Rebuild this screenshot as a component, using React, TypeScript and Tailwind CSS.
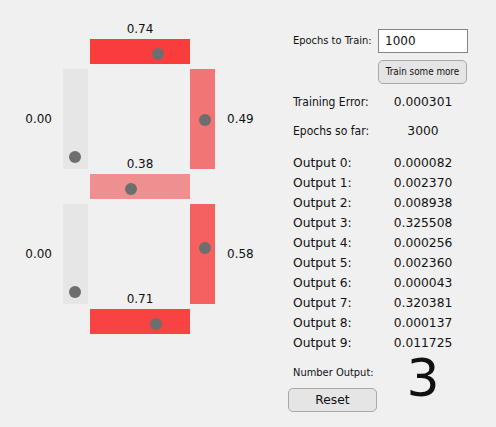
import React from 'react';

const segments = {
  top: 0.74,
  upperLeft: 0.0,
  upperRight: 0.49,
  middle: 0.38,
  lowerLeft: 0.0,
  lowerRight: 0.58,
  bottom: 0.71,
};

const outputs = [
  '0.000082',
  '0.002370',
  '0.008938',
  '0.325508',
  '0.000256',
  '0.002360',
  '0.000043',
  '0.320381',
  '0.000137',
  '0.011725',
];

// grey at 0, red at 1
const segColor = (v: number) => {
  const r = Math.round(230 + 25 * v);
  const gb = Math.round(230 * (1 - v));
  return `rgb(${r}, ${gb}, ${gb})`;
};

function HBar({ value }: { value: number }) {
  return (
    <div className="relative w-[100px] h-[25px]" style={{ backgroundColor: segColor(value) }}>
      <div
        className="absolute top-[9px] w-[12px] h-[12px] rounded-full bg-[#6e6e6e]"
        style={{ left: `${6.5 + 75 * value}px` }}
      />
    </div>
  );
}

function VBar({ value, right }: { value: number; right?: boolean }) {
  return (
    <div className="relative w-[25px] h-[100px]" style={{ backgroundColor: segColor(value) }}>
      <div
        className={`absolute w-[12px] h-[12px] rounded-full bg-[#6e6e6e] ${right ? 'left-[9px]' : 'left-[6px]'}`}
        style={{ top: `${82 - 76 * value}px` }}
      />
    </div>
  );
}

function SegLabel({ value }: { value: number }) {
  return (
    <div className="h-[15px] leading-[15px] text-center text-[12px]">{value.toFixed(2)}</div>
  );
}

export default function App() {
  const labelFont = "font-['DejaVu_Sans_Condensed','DejaVu_Sans',sans-serif] font-stretch-condensed";

  return (
    <div className="w-[496px] h-[427px] bg-[#f0f0f0] text-[#111] flex font-['DejaVu_Sans',sans-serif] overflow-hidden">
      {/* seven segment display */}
      <div className="flex w-[288px] shrink-0">
        {/* left column */}
        <div className="flex flex-col pt-[69px] gap-[35px]">
          <div className="flex items-center h-[100px]">
            <div className="w-[63px] pr-[11px] text-right text-[12px]">{segments.upperLeft.toFixed(2)}</div>
            <VBar value={segments.upperLeft} />
          </div>
          <div className="flex items-center h-[100px]">
            <div className="w-[63px] pr-[11px] text-right text-[12px]">{segments.lowerLeft.toFixed(2)}</div>
            <VBar value={segments.lowerLeft} />
          </div>
        </div>

        {/* center column */}
        <div className="flex flex-col w-[100px] ml-[2px] pt-[22px]">
          <SegLabel value={segments.top} />
          <div className="mt-[2px]">
            <HBar value={segments.top} />
          </div>
          <div className="mt-[93px]">
            <SegLabel value={segments.middle} />
          </div>
          <div className="mt-[2px]">
            <HBar value={segments.middle} />
          </div>
          <div className="mt-[93px]">
            <SegLabel value={segments.bottom} />
          </div>
          <div className="mt-[2px]">
            <HBar value={segments.bottom} />
          </div>
        </div>

        {/* right column */}
        <div className="flex flex-col pt-[69px] gap-[35px]">
          <div className="flex items-center h-[100px]">
            <VBar value={segments.upperRight} right />
            <div className="pl-[12px] text-[12px]">{segments.upperRight.toFixed(2)}</div>
          </div>
          <div className="flex items-center h-[100px]">
            <VBar value={segments.lowerRight} right />
            <div className="pl-[12px] text-[12px]">{segments.lowerRight.toFixed(2)}</div>
          </div>
        </div>
      </div>

      {/* training panel */}
      <div className="w-[190px] flex flex-col">
        <div className="flex items-center mt-[29px] pl-[5px]">
          <span className={`w-[85px] text-[11px] ${labelFont}`}>Epochs to Train:</span>
          <input
            defaultValue="1000"
            className="w-[90px] h-[24px] bg-white border border-[#848484] pl-[6px] text-[12px] outline-none font-['DejaVu_Sans',sans-serif]"
          />
        </div>
        <div className="pl-[90px] mt-[5px]">
          <button className={`w-[89px] h-[24px] rounded-[5px] bg-[#e5e5e5] border border-[#a8a8a8] text-[9.8px] ${labelFont}`}>
            Train some more
          </button>
        </div>

        <div className="flex items-center h-[20px] mt-[8px] pl-[5px]">
          <span className={`w-[90px] text-[12px] ${labelFont}`}>Training Error:</span>
          <span className="w-[80px] text-center text-[12.3px]">0.000301</span>
        </div>
        <div className="flex items-center h-[20px] mt-[9px] pl-[5px]">
          <span className={`w-[90px] text-[12px] ${labelFont}`}>Epochs so far:</span>
          <span className="w-[80px] text-center text-[12.3px]">3000</span>
        </div>

        <div className="flex flex-col mt-[12px]">
          {outputs.map((o, i) => (
            <div key={i} className="flex items-center h-[20px] pl-[5px]">
              <span className="w-[90px] text-[12.3px]">Output {i}:</span>
              <span className="w-[80px] text-center text-[12.3px]">{o}</span>
            </div>
          ))}
        </div>

        <div className="flex">
          <div className="flex flex-col w-[95px]">
            <div className="flex items-center h-[20px] mt-[10px] pl-[5px]">
              <span className={`text-[11px] ${labelFont}`}>Number Output:</span>
            </div>
            <button className="mt-[5px] w-[89px] h-[24px] rounded-[5px] bg-[#e5e5e5] border border-[#a8a8a8] text-[12.3px]">
              Reset
            </button>
          </div>
          <div className="mt-[5px] w-[80px] h-[40px] text-center text-[52px] leading-[40px]">3</div>
        </div>
      </div>
    </div>
  );
}
